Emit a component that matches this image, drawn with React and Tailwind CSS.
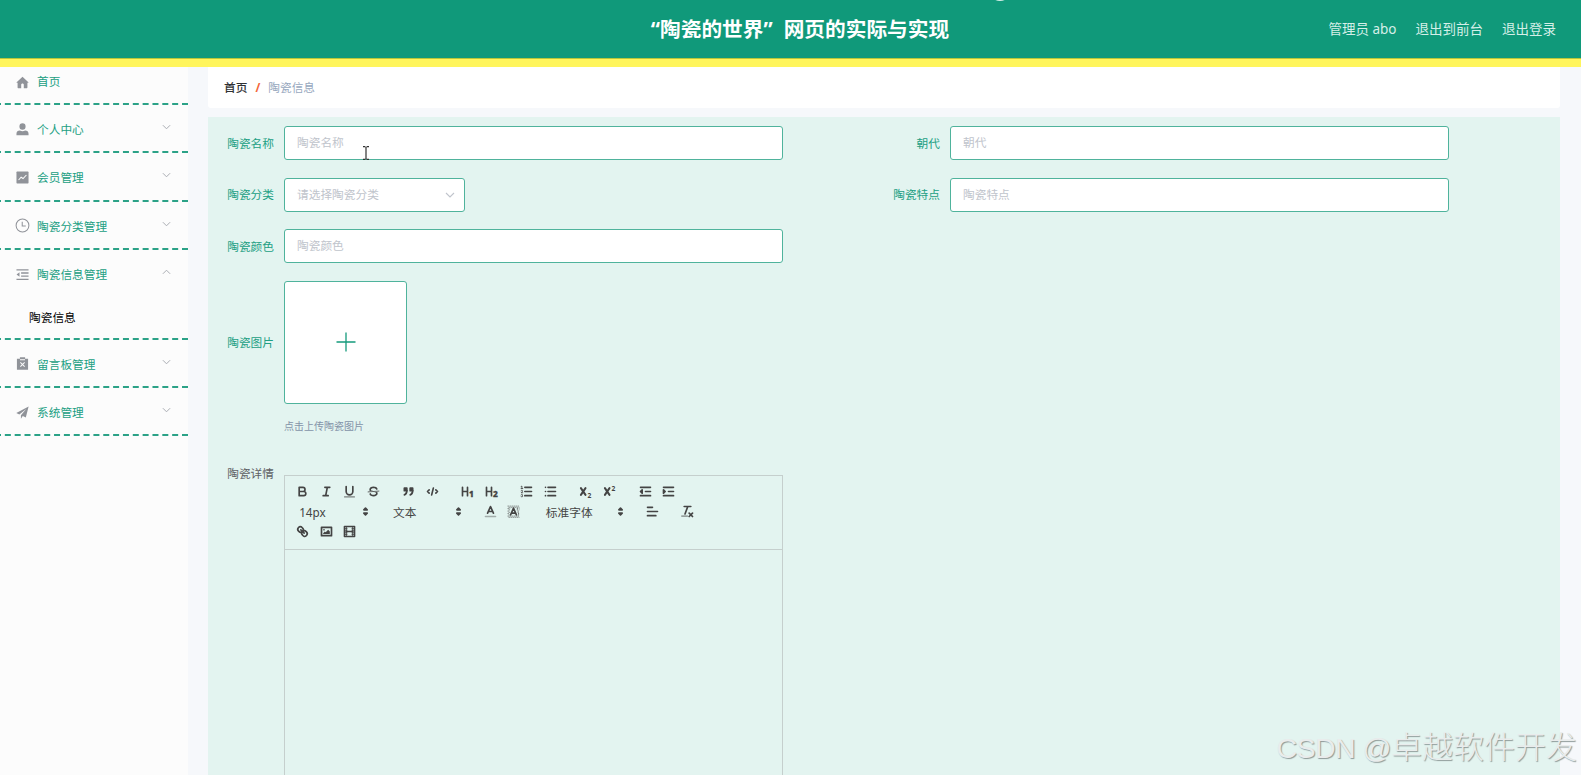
import { useState } from "react";

const MENU = [
  { name: "个人中心", icon: "user" },
  { name: "会员管理", icon: "chart" },
  { name: "陶瓷分类管理", icon: "clock" },
  { name: "陶瓷信息管理", icon: "fold", children: ["陶瓷信息"] },
  { name: "留言板管理", icon: "release" },
  { name: "系统管理", icon: "send" },
];

const MENU_ICONS = {
  home: <path fill="currentColor" d="M7 .9.7 6.600c-.3.300-.1.700.3.700h.7v5.200c0 .4.300.7.700.7h3.200V9.500c0-.9.600-1.500 1.400-1.500s1.400.6 1.400 1.500v3.700h3.200c.4 0 .7-.3.700-.7V7.300h.7c.4 0 .6-.4.300-.7Z" />,
  user: (
    <g fill="currentColor">
      <ellipse cx="7" cy="3.900" rx="3.300" ry="3.500" />
      <path d="M.5 13.300v-1.800C.5 9.300 2 8.500 4.200 8.200 5.800 9.200 8.200 9.200 9.800 8.200c2.200.3 3.700 1.100 3.700 3.300v1.800Z" />
    </g>
  ),
  chart: (
    <>
      <rect x=".5" y=".5" width="13" height="13" rx=".8" fill="currentColor" />
      <path d="M2.800 9.700 5.500 6.700 7.600 8.100 11.200 4.300" fill="none" stroke="#fcfcfc" strokeWidth="1.100" />
    </>
  ),
  clock: (
    <g fill="none" stroke="currentColor" strokeWidth="1.100">
      <circle cx="7" cy="7" r="6.900" />
      <path d="M6.700 3v4.500H10.500" />
    </g>
  ),
  fold: (
    <g stroke="currentColor" strokeWidth="1.500">
      <path d="M.5 2h13M5.500 5.400h8M5.500 8.800h8M.5 12.200h13" />
      <path d="M3.800 4.700v4.800L.6 7.100Z" fill="currentColor" stroke="none" />
    </g>
  ),
  release: (
    <>
      <path d="M1 1.800h3.200V.3h5.600v1.500H13v11.900H1Z" fill="currentColor" />
      <path d="M4.300 3h5.400M4.700 5.800l4.600 4.600M9.300 5.800 4.700 10.400" stroke="#fcfcfc" strokeWidth="1.100" fill="none" />
    </>
  ),
  send: <path fill="currentColor" d="M13.600.5.3 7.500l3.300 1.600L11 3.300 5.300 9.900v3.800l2-2.800 3.300 1.500Z" />,
};

function MenuIcon({ name }) {
  return (
    <svg viewBox="0 0 14 14" className="w-[13px] h-[13px] shrink-0 text-[#909399] overflow-visible">
      {MENU_ICONS[name]}
    </svg>
  );
}

function Chevron({ up, className }) {
  return (
    <svg viewBox="0 0 10 6" className={className} fill="none" stroke="currentColor" strokeWidth="1.100">
      <path d={up ? "M1 5 5 1 9 5" : "M1 1 5 5 9 1"} />
    </svg>
  );
}

// editor toolbar icons, 18x18 grid
const TOOL_ICONS = {
  bold: <path d="M5,4H9.500a2.500,2.500,0,0,1,0,5H5ZM5,9h5.500a2.500,2.500,0,0,1,0,5H5Z" />,
  italic: <path d="M7,4H13M5,14H11M8,14 10,4" />,
  underline: (
    <>
      <path d="M5,3V9a4,4,0,0,0,8,0V3" />
      <path d="M3,15.500H15" strokeWidth="1" />
    </>
  ),
  strike: (
    <>
      <path d="M15.500,8.500 2.500,9.500" strokeWidth="1" />
      <g fill="currentColor" stroke="none">
        <path d="M9.007,8C6.542,7.791,6,7.519,6,6.500,6,5.792,7.283,5,9,5c1.571,0,2.765.679,2.969,1.309a1,1,0,0,0,1.900-.617C13.356,4.106,11.354,3,9,3,6.200,3,4,4.538,4,6.500a3.200,3.200,0,0,0,.5,1.843Z" />
        <path d="M8.984,10C11.457,10.208,12,10.479,12,11.500c0,.708-1.283,1.500-3,1.500-1.571,0-2.765-.679-2.969-1.309a1,1,0,1,0-1.900.617C4.644,13.894,6.646,15,9,15c2.800,0,5-1.538,5-3.500a3.200,3.200,0,0,0-.5-1.843Z" />
      </g>
    </>
  ),
  quote: (
    <g fill="currentColor">
      <rect x="4" y="5" width="3" height="3" />
      <rect x="11" y="5" width="3" height="3" />
      <path d="M7,8c0,4.031-3,5-3,5M14,8c0,4.031-3,5-3,5" />
    </g>
  ),
  code: <path d="M5,7 3,9 5,11M13,7 15,9 13,11M10,5 8,13" />,
  h1: (
    <>
      <path d="M3,4V14M9,4V14M3,9H9" />
      <text x="10.800" y="15" fontSize="10" fontWeight="800" fill="currentColor" stroke="currentColor" strokeWidth=".4">1</text>
    </>
  ),
  h2: (
    <>
      <path d="M3,4V14M9,4V14M3,9H9" />
      <text x="10.800" y="15" fontSize="10" fontWeight="800" fill="currentColor" stroke="currentColor" strokeWidth=".4">2</text>
    </>
  ),
  ordered: (
    <>
      <path d="M7,4H15M7,9H15M7,14H15" />
      <path strokeWidth="1" d="M2.500,5.500h2M3.500,5.500V2.500l-1,.5M4.500,10.500h-2c0-.234,1.850-1.076,1.850-2.234A.959.959,0,0,0,2.500,8.156M2.500,14.846a.959.959,0,0,0,1.850-.109A.7.700,0,0,0,3.750,14a.688.688,0,0,0,.6-.736.959.959,0,0,0-1.850-.109" />
    </>
  ),
  bullet: (
    <>
      <path d="M6,4H15M6,9H15M6,14H15" />
      <path d="M3,4h.01M3,9h.01M3,14h.01" />
    </>
  ),
  sub: (
    <>
      <path d="M3.500,5 9,13M9,5 3.500,13" strokeWidth="2.400" />
      <text x="11.300" y="16.500" fontSize="8" fontWeight="700" fill="currentColor" stroke="none">2</text>
    </>
  ),
  sup: (
    <>
      <path d="M3.500,5 9,13M9,5 3.500,13" strokeWidth="2.400" />
      <text x="11.300" y="7.800" fontSize="8" fontWeight="700" fill="currentColor" stroke="none">2</text>
    </>
  ),
  outdent: (
    <>
      <path d="M3,14H15M3,4H15M9,9H15" />
      <path d="M5,7V11L3,9Z" fill="currentColor" />
    </>
  ),
  indent: (
    <>
      <path d="M3,14H15M3,4H15M9,9H15" />
      <path d="M3,7V11L5,9Z" fill="currentColor" />
    </>
  ),
  color: (
    <>
      <path d="M3,15H15" opacity=".4" />
      <path d="M5.500,11 9,3 12.500,11M11.630,9H6.380" />
    </>
  ),
  background: (
    <>
      <g strokeWidth="1" strokeLinecap="butt" strokeDasharray="1.200 1.200">
        <path d="M2,2.500H16M3.200,4H16M2,5.500H5M13,5.500H16M3.200,7H5M13,7H16M2,8.500H4.500M14,8.500H16M3.200,10H4.500M14,10H16M2,11.500H4M14.500,11.500H16M3.200,13H4M14.500,13H16M2,14.500H16M3.200,16H16" />
      </g>
      <path d="M5.500,13 9,5 12.500,13M11.630,11H6.380" />
    </>
  ),
  align: <path d="M3,9H15M3,14H13M3,4H9" />,
  clean: (
    <>
      <path d="M5,3H13M6,12 9.350,3M11,11 15,15M15,11 11,15" />
      <path d="M2,14.500H9" strokeWidth="1" />
    </>
  ),
  link: (
    <>
      <path d="M7,7 11,11" />
      <path d="M8.900,4.577a3.476,3.476,0,0,1,.36,4.679A3.476,3.476,0,0,1,4.577,8.900C3.185,7.500,2.035,6.400,4.217,4.217S7.500,3.185,8.900,4.577Z" />
      <path d="M13.423,9.100a3.476,3.476,0,0,0-4.679-.36,3.476,3.476,0,0,0,.36,4.679c1.392,1.392,2.500,2.542,4.679.36S14.815,10.500,13.423,9.100Z" />
    </>
  ),
  image: (
    <>
      <rect x="3" y="4" width="12" height="10" />
      <g fill="currentColor" stroke="none">
        <circle cx="6" cy="7" r="1" />
        <path d="M5,12V11L7,9 8,10 11,7 13,9V12Z" />
      </g>
    </>
  ),
  video: (
    <>
      <rect x="3" y="3" width="12" height="12" />
      <path d="M5.500,3V15M12.500,3V15M3,5.500H6M3,7.500H6M3,10.500H6M3,12.500H6M12,5.500H15M12,7.500H15M12,10.500H15M12,12.500H15" strokeWidth="1" />
      <path d="M5,9H13" />
    </>
  ),
};

function Tool({ name }) {
  return (
    <button type="button" className="w-[23.400px] h-5 flex items-center justify-center shrink-0">
      <svg
        viewBox="0 0 18 18"
        className="w-[15px] h-[15px] overflow-visible"
        fill="none"
        stroke="currentColor"
        strokeWidth="2"
        strokeLinecap="round"
        strokeLinejoin="round"
      >
        {TOOL_ICONS[name]}
      </svg>
    </button>
  );
}

function ToolGroup({ names }) {
  return (
    <div className="flex mr-[12.300px]">
      {names.map(name => <Tool key={name} name={name} />)}
    </div>
  );
}

function Picker({ label, className }) {
  return (
    <div className={`flex items-center justify-between h-5 pl-[8px] shrink-0 ${className}`}>
      <span>{label}</span>
      <svg viewBox="0 0 18 18" className="w-[15px] h-[15px]" fill="currentColor" stroke="currentColor" strokeWidth="2" strokeLinejoin="round">
        <path d="M7,11 9,13 11,11ZM7,7 9,5 11,7Z" />
      </svg>
    </div>
  );
}

function Field({ label, className = "", children }) {
  return (
    <div className={`flex items-center ${className}`}>
      <label className="w-[67px] pr-[10px] pb-px text-right text-[#229f83] shrink-0">{label}</label>
      {children}
    </div>
  );
}

function TextInput({ name }) {
  return (
    <input
      type="text"
      placeholder={name}
      className="w-[499px] h-[34px] px-[12px] pb-[2px] bg-white border border-[#4fb39c] rounded-[3px] outline-none placeholder:text-[#c0c4cc]"
    />
  );
}

function App() {
  const [opened, setOpened] = useState("陶瓷信息管理");

  return (
    <div className="relative h-[775px] overflow-hidden flex flex-col bg-[#f6f8fb] text-[11.700px] leading-[18px] font-['Noto_Sans','Noto_Sans_CJK_SC',sans-serif]">
      <header className="relative h-[58px] shrink-0 bg-[#10997a] flex items-center justify-center text-white">
        <h1 className="text-[20.700px] leading-[30px] font-bold pl-[19px] whitespace-nowrap">
          “陶瓷的世界”<span className="inline-block w-[11px]" />网页的实际与实现
        </h1>
        <div className="absolute right-[25px] top-[19px] flex gap-[19px] text-[13.500px] leading-[20px] text-[#d5efe8]">
          <span>管理员 abo</span>
          <span>退出到前台</span>
          <span>退出登录</span>
        </div>
        <div className="absolute left-[989px] -top-[21px] w-[22px] h-[22px] rounded-full bg-[#d5efe8]" />
      </header>
      <div className="h-[8.500px] shrink-0 bg-[#fff55c] border-t border-[#b9c63a]" />

      <div className="flex flex-1 min-h-0">
        <aside className="w-[193px] -ml-[5px] shrink-0 bg-[#fcfcfc] text-[#229f83]">
          <div className="h-[38.500px] flex items-start pl-[21px] pt-[5px] gap-[8px] border-b-2 border-dashed border-[#2ba287]">
            <div className="pt-[4px]"><MenuIcon name="home" /></div>
            <span>首页</span>
          </div>
          {MENU.map(item => (
            <div key={item.name} className="border-b-2 border-dashed border-[#2ba287]">
              <div
                onClick={() => setOpened(opened === item.name ? "" : item.name)}
                className="h-[46.300px] flex items-center pt-[2px] pl-[21px] pr-[17.500px] gap-[8px] cursor-pointer"
              >
                <MenuIcon name={item.icon} />
                <span className="flex-1">{item.name}</span>
                <Chevron up={opened === item.name} className="w-[9px] h-[6px] mb-[4px] text-[#a9acb2]" />
              </div>
              {opened === item.name && item.children?.map(child => (
                <div key={child} className="h-[41.500px] flex items-center pl-[34px] text-black">{child}</div>
              ))}
            </div>
          ))}
        </aside>

        <main className="flex-1 flex flex-col pl-[19.500px] pr-[21.500px] min-w-0">
          <div className="h-[41.500px] shrink-0 bg-white rounded-b-[3px] flex items-center pl-[16.500px]">
            <span className="text-[#303133] font-medium">首页</span>
            <span className="px-[8px] font-bold text-[#f4673b]">/</span>
            <span className="text-[#97a8be]">陶瓷信息</span>
          </div>

          <form className="mt-[9px] flex-1 bg-[#e3f4f0] pt-[9px] pl-[9.500px]">
            <div className="grid grid-cols-[666px_1fr] gap-y-[17.700px]">
              <Field label="陶瓷名称"><TextInput name="陶瓷名称" /></Field>
              <Field label="朝代"><TextInput name="朝代" /></Field>
              <Field label="陶瓷分类">
                <div className="w-[181px] h-[34px] pl-[12px] pr-[9px] flex items-center justify-between bg-white border border-[#4fb39c] rounded-[3px] text-[#c0c4cc]">
                  <span className="pb-px">请选择陶瓷分类</span>
                  <Chevron className="w-[10px] h-[6px] mt-px" />
                </div>
              </Field>
              <Field label="陶瓷特点"><TextInput name="陶瓷特点" /></Field>
              <Field label="陶瓷颜色"><TextInput name="陶瓷颜色" /></Field>
            </div>

            <Field label="陶瓷图片" className="mt-[17.500px]">
              <div className="w-[123px] h-[123.500px] bg-white border border-[#4fb39c] rounded-[3px] flex items-center justify-center pb-px">
                <svg viewBox="0 0 20 20" className="w-5 h-5 text-[#159a7c]" stroke="currentColor" strokeWidth="1.300">
                  <path d="M10 .5v19M.5 10h19" />
                </svg>
              </div>
            </Field>
            <p className="ml-[67px] mt-[12.500px] text-[10px] leading-[18px] text-[#8493a8]">点击上传陶瓷图片</p>

            <div className="flex mt-[29px]">
              <label className="w-[67px] pr-[10px] text-right text-[#606266] shrink-0">陶瓷详情</label>
              <div className="w-[499px] mt-[11px] h-[400px] border border-[#c5cfcd] text-[#444]">
                <div className="h-[74px] pt-[6px] pl-[6.200px] border-b border-[#c5cfcd]">
                  <div className="flex">
                    <ToolGroup names={["bold", "italic", "underline", "strike"]} />
                    <ToolGroup names={["quote", "code"]} />
                    <ToolGroup names={["h1", "h2"]} />
                    <ToolGroup names={["ordered", "bullet"]} />
                    <ToolGroup names={["sub", "sup"]} />
                    <ToolGroup names={["outdent", "indent"]} />
                  </div>
                  <div className="flex">
                    <Picker label="14px" className="w-[81.500px] mr-[12.300px]" />
                    <Picker label="文本" className="w-[81.500px] mr-[12.300px]" />
                    <ToolGroup names={["color", "background"]} />
                    <Picker label="标准字体" className="w-[90px] mr-[12.500px]" />
                    <ToolGroup names={["align"]} />
                    <ToolGroup names={["clean"]} />
                  </div>
                  <div className="flex">
                    <ToolGroup names={["link", "image", "video"]} />
                  </div>
                </div>
              </div>
            </div>
          </form>
        </main>
      </div>

      {/* text cursor */}
      <svg viewBox="0 0 6 14" className="absolute left-[363px] top-[145.500px] w-[6px] h-[14px]" fill="none" stroke="#333" strokeWidth="1.200">
        <path d="M0 .6h2.400M3.600.6H6M3 1v12M0 13.400h2.400M3.600 13.400H6" />
      </svg>

      <div className="absolute right-[4px] bottom-[5px] text-[31px] leading-[44px] whitespace-nowrap font-light text-[#e9ecec] font-['Liberation_Sans','Noto_Sans_CJK_SC',sans-serif] [text-shadow:1px_1px_1px_#8e9a98]">
        <span className="text-[28.500px] tracking-[-0.500px]">CSDN @</span>卓越软件开发
      </div>
    </div>
  );
}

export default App;
